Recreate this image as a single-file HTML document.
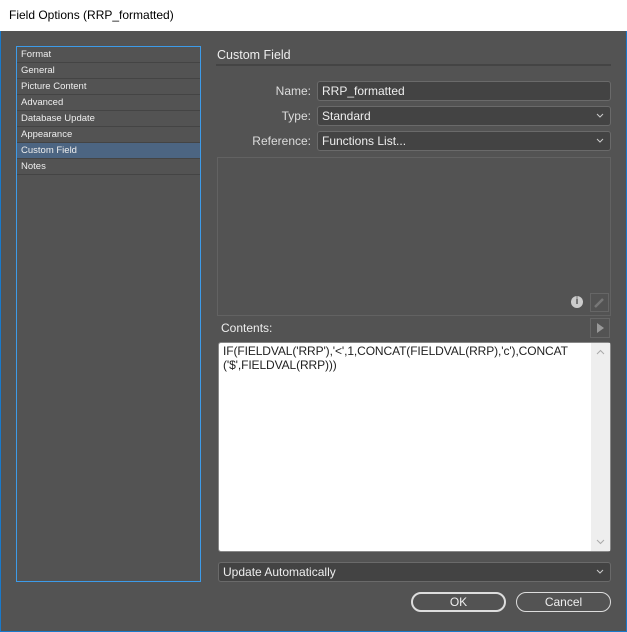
<!DOCTYPE html>
<html><head><style>
*{margin:0;padding:0;box-sizing:border-box}
body{width:627px;height:632px;overflow:hidden;background:#535353;font-family:"Liberation Sans",sans-serif;position:relative}
.win{position:absolute;left:0;top:0;width:627px;height:632px;border:1px solid #1979ca;border-top:none}
.title{position:absolute;left:0;top:0;width:627px;height:31px;background:#fff;color:#000;font-size:12px;padding:8px 0 0 9px}
.a{position:absolute}
.list{left:16px;top:46px;width:185px;height:536px;border:1px solid #3d9be9}
.row{position:absolute;left:0;width:183px;height:16px;border-bottom:1px solid #444;color:#eee;font-size:9.5px;padding:2px 0 0 4px}
.sel{background:#4c6582}
.lbl{color:#ddd;font-size:12px;text-align:right;width:100px}
.inp{background:#434343;border:1px solid #6a6a6a;border-radius:3px;color:#eee;font-size:12px;padding:2px 0 0 4px;height:20px}
.chev{position:absolute;right:6px;top:6px}
.btn{border:2px solid #ddd;border-radius:10px;color:#eee;font-size:12px;text-align:center;height:20px;line-height:16px}
</style></head><body>
<div class="win"></div>
<div class="title">Field Options (RRP_formatted)</div>
<div class="a list">
<div class="row" style="top:0">Format</div>
<div class="row" style="top:16px">General</div>
<div class="row" style="top:32px">Picture Content</div>
<div class="row" style="top:48px">Advanced</div>
<div class="row" style="top:64px">Database Update</div>
<div class="row" style="top:80px">Appearance</div>
<div class="row sel" style="top:96px">Custom Field</div>
<div class="row" style="top:112px">Notes</div>
</div>
<div class="a" style="left:217px;top:48px;color:#eee;font-size:12.5px">Custom Field</div>
<div class="a" style="left:216px;top:64px;width:395px;height:2px;background:#444"></div>
<div class="a lbl" style="left:211px;top:84px">Name:</div>
<div class="a inp" style="left:317px;top:81px;width:294px">RRP_formatted</div>
<div class="a lbl" style="left:211px;top:109px">Type:</div>
<div class="a inp" style="left:317px;top:106px;width:294px">Standard<svg class="chev" width="8" height="5"><path d="M1 1 L4 4 L7 1" stroke="#ccc" fill="none"/></svg></div>
<div class="a lbl" style="left:211px;top:134px">Reference:</div>
<div class="a inp" style="left:317px;top:131px;width:294px">Functions List...<svg class="chev" width="8" height="5"><path d="M1 1 L4 4 L7 1" stroke="#ccc" fill="none"/></svg></div>
<div class="a" style="left:217px;top:157px;width:394px;height:159px;border:1px solid #626262"></div>
<div class="a" style="left:571px;top:296px;width:12px;height:12px;border-radius:50%;background:#ccc;color:#535353;font-size:10px;font-weight:bold;text-align:center;line-height:12px">i</div>
<div class="a" style="left:590px;top:293px;width:19px;height:19px;border:1px solid #666"><svg width="17" height="17"><path d="M4 13 L12 5" stroke="#777" stroke-width="2.5"/></svg></div>
<div class="a" style="left:221px;top:321px;color:#eee;font-size:12px">Contents:</div>
<div class="a" style="left:590px;top:318px;width:20px;height:20px;border:1px solid #666"><svg width="18" height="18"><path d="M6 4 L13 9 L6 14Z" fill="#999"/></svg></div>
<div class="a" style="left:218px;top:342px;width:393px;height:210px;background:#fff;border-radius:3px;border:1px solid #888"></div>
<div class="a" style="left:591px;top:343px;width:19px;height:208px;background:#eee"></div>
<svg class="a" style="left:596px;top:349px" width="9" height="6"><path d="M1 5 L4.5 1.5 L8 5" stroke="#aaa" fill="none"/></svg>
<svg class="a" style="left:596px;top:539px" width="9" height="6"><path d="M1 1 L4.5 4.5 L8 1" stroke="#aaa" fill="none"/></svg>
<div class="a" style="left:223px;top:344px;width:360px;color:#222;font-size:12px;line-height:14px;letter-spacing:-0.1px">IF(FIELDVAL('RRP'),'&lt;',1,CONCAT(FIELDVAL(RRP),'c'),CONCAT ('$',FIELDVAL(RRP)))</div>
<div class="a inp" style="left:218px;top:562px;width:393px">Update Automatically<svg class="chev" width="8" height="5"><path d="M1 1 L4 4 L7 1" stroke="#ccc" fill="none"/></svg></div>
<div class="a btn" style="left:411px;top:592px;width:95px">OK</div>
<div class="a btn" style="left:516px;top:592px;width:95px;border-width:1px;line-height:18px">Cancel</div>
</body></html>
